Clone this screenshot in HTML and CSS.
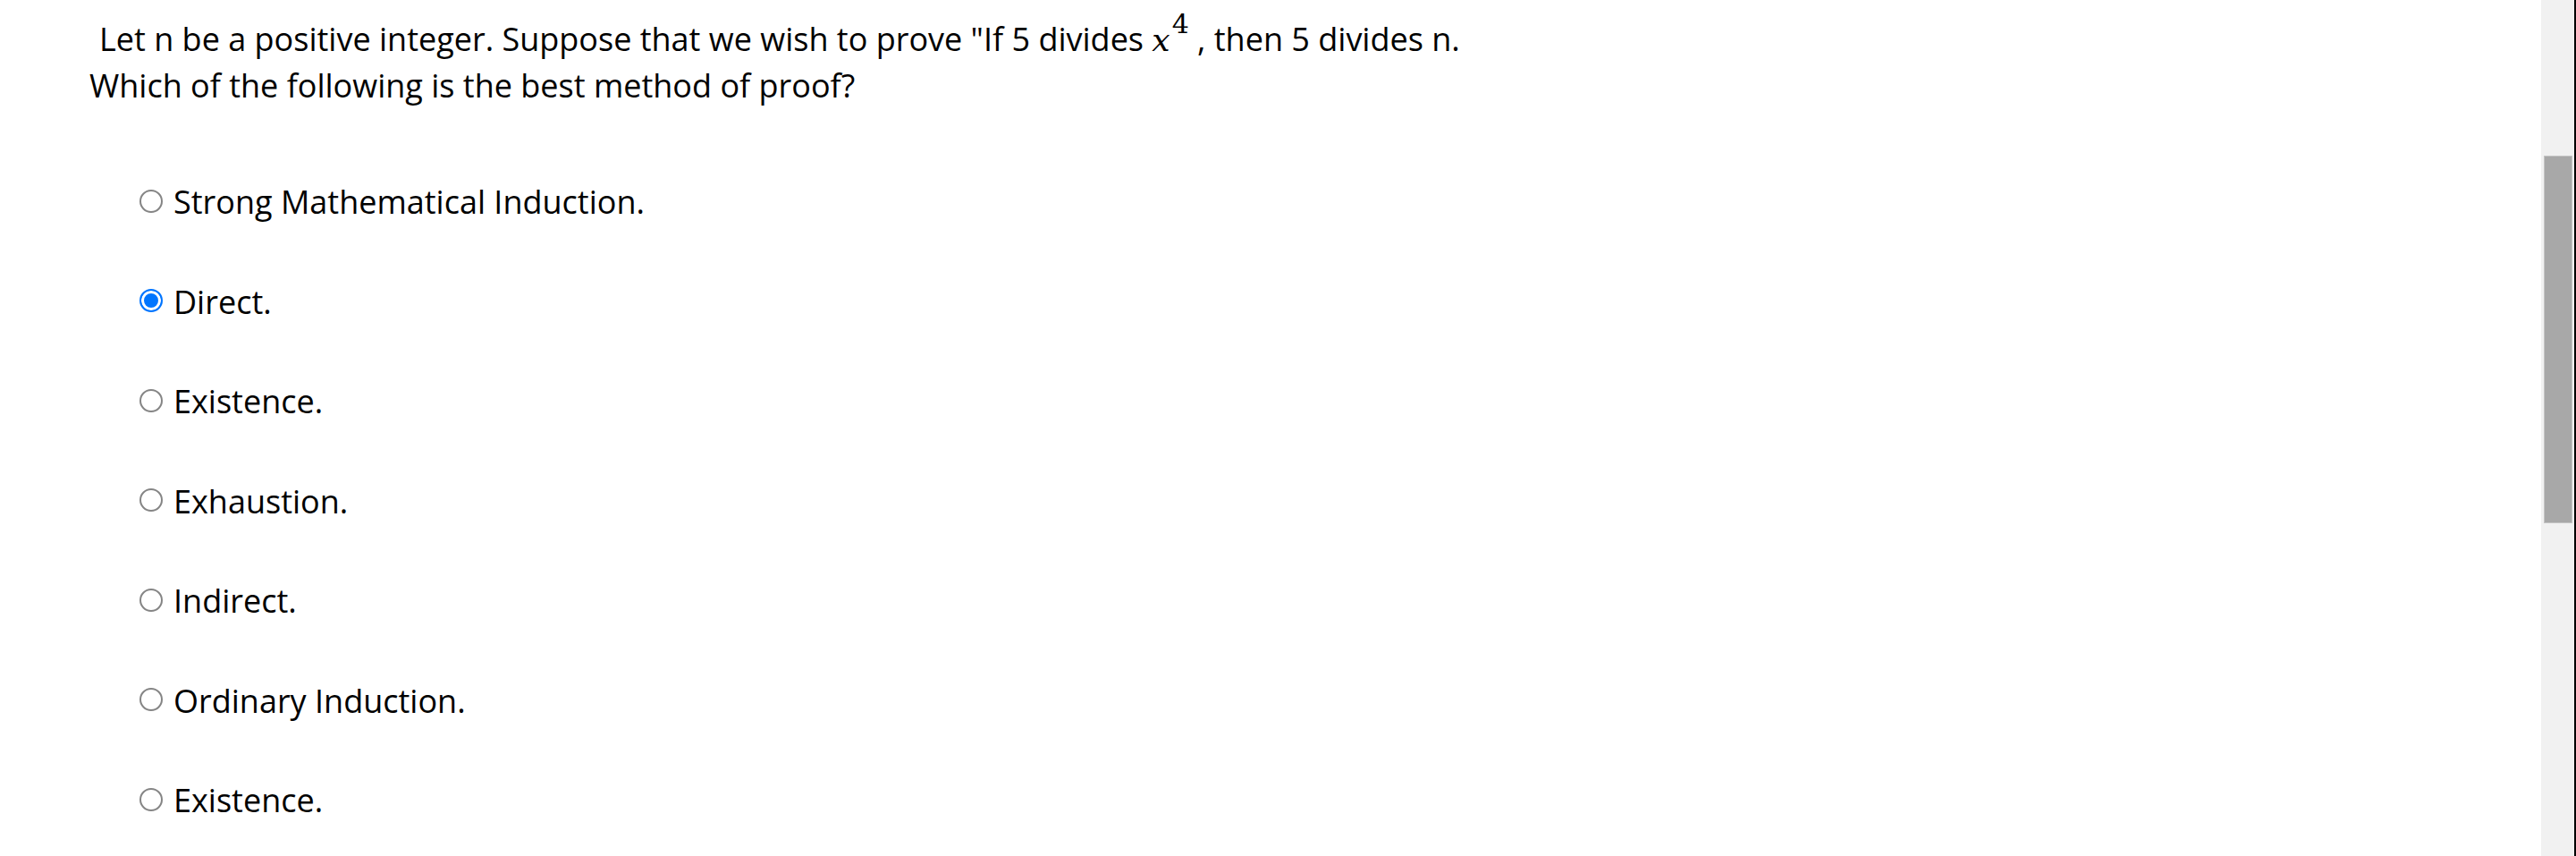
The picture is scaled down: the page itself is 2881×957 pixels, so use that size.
FILE: index.html
```html
<!DOCTYPE html>
<html lang="en">
<head>
<meta charset="utf-8">
<title>Question</title>
<link rel="stylesheet" href="styles.css">
</head>
<body>
<div class="page">
  <main class="content">
    <div class="question">
      <p class="line first">Let n be a positive integer. Suppose that we wish to prove "If 5 divides <span class="math"><span class="mi">x</span><sup class="sup">4</sup></span> , then 5 divides n.</p>
      <p class="line">Which of the following is the best method of proof?</p>
    </div>
    <ul class="options">
      <li class="option"><input type="radio" name="q" class="radio"><span>Strong Mathematical Induction.</span></li>
      <li class="option"><input type="radio" name="q" class="radio" checked><span>Direct.</span></li>
      <li class="option"><input type="radio" name="q" class="radio"><span>Existence.</span></li>
      <li class="option"><input type="radio" name="q" class="radio"><span>Exhaustion.</span></li>
      <li class="option"><input type="radio" name="q" class="radio"><span>Indirect.</span></li>
      <li class="option"><input type="radio" name="q" class="radio"><span>Ordinary Induction.</span></li>
      <li class="option"><input type="radio" name="q" class="radio"><span>Existence.</span></li>
    </ul>
  </main>
  <aside class="scrollbar"><div class="thumb"></div></aside>
</div>
</body>
</html>
```
FILE: styles.css
```css
html, body {
  margin: 0;
  padding: 0;
  height: 100%;
  background: #fff;
}
body {
  overflow: hidden;
  font-family: "Open Sans", "Noto Sans", sans-serif;
  color: #000;
}
.page {
  display: flex;
  height: 957px;
}
.content {
  flex: 1;
  min-width: 0;
}
.question {
  padding: 18px 0 0 100px;
}
.line {
  margin: 0;
  font-size: 36px;
  line-height: 51px;
  white-space: nowrap;
}
.line.first {
  padding-left: 11px;
}
.math {
  font-family: "DejaVu Serif", "Liberation Serif", serif;
}
.mi {
  font-style: italic;
  font-size: 36px;
}
.sup {
  font-size: 30px;
  vertical-align: 20px;
  line-height: 0;
  margin-left: 2px;
}
.options {
  list-style: none;
  margin: 79px 0 0 0;
  padding: 0 0 0 156px;
  display: flex;
  flex-direction: column;
  gap: 60.5px;
}
.option {
  display: flex;
  align-items: center;
  gap: 12px;
  height: 51px;
  font-size: 36px;
  line-height: 51px;
}
.radio {
  appearance: none;
  -webkit-appearance: none;
  margin: 0;
  width: 26px;
  height: 26px;
  box-sizing: border-box;
  border: 2px solid #858585;
  border-radius: 50%;
  background: #fff;
  flex: none;
  position: relative;
  top: -1px;
}
.radio:checked {
  border-color: #0075ff;
  background: #0075ff;
  box-shadow: inset 0 0 0 3px #fff;
}
.scrollbar {
  width: 37px;
  flex: none;
  background: #f1f1f1;
  border-right: 2px solid #000;
  box-sizing: content-box;
  padding-top: 174px;
}
.thumb {
  margin-left: 3px;
  width: 32px;
  height: 411px;
  box-sizing: border-box;
  background: #a8a8a8;
  border: 1px solid #c4c4c4;
}
```
